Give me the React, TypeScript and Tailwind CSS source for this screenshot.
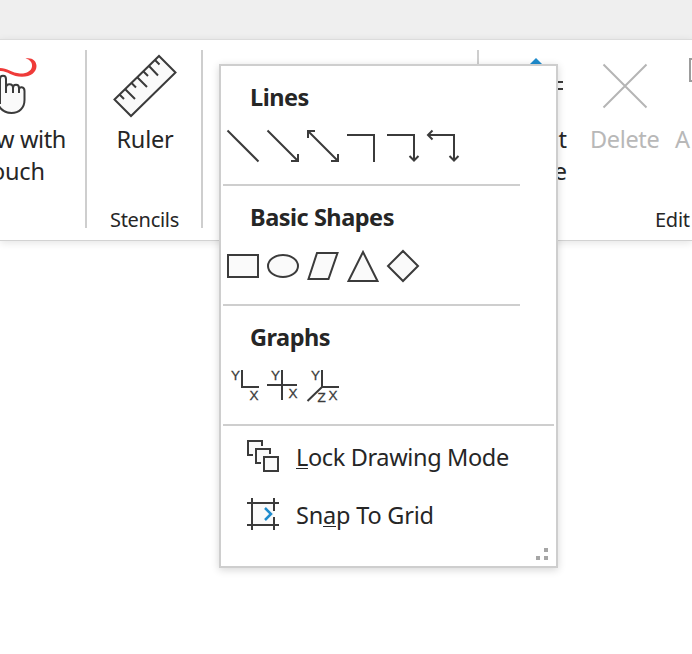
import type { ReactNode } from "react";

function Icon({ children }: { children: ReactNode }) {
  return (
    <svg viewBox="0 0 32 32" className="block h-8 w-8 shrink-0 overflow-visible" fill="none" stroke="#3b3b3b" strokeWidth="2">
      {children}
    </svg>
  );
}

function Section({ title, children }: { title: string; children: ReactNode }) {
  return (
    <section className="flex h-[120px] flex-col">
      <h2 className="h-16 pt-[15px] pl-[29px] text-[23.5px] leading-8 font-bold tracking-[-0.48px]">{title}</h2>
      <div className="flex gap-2 pl-1.5">{children}</div>
    </section>
  );
}

function Rule({ wide = false }: { wide?: boolean }) {
  return <div className={wide ? "ml-0.5 -mt-0.5 h-0.5 w-[331px] bg-[#cecece]" : "ml-0.5 -mt-0.5 h-0.5 w-[297px] bg-[#cecece]"} />;
}

function Divider() {
  return <div className="mt-[10px] h-[178px] w-0.5 shrink-0 bg-[#cecece]" />;
}

function Ribbon() {
  return (
    <div className="flex h-[202px] overflow-hidden border-t border-b border-t-[#dcdcdc] border-b-[#d2d2d2] bg-white text-[23.5px] leading-8 shadow-[0_2px_8px_rgba(0,0,0,0.11)]">
      <div className="flex w-[85px] shrink-0 flex-col">
        <svg viewBox="0 40 85 83" className="block h-[83px] w-[85px] shrink-0" fill="none">
          <path d="M0 71C7 70.500 12 76.800 22 76.800C31 76.800 36.500 72 36.500 66C36.500 60.500 31.500 57 25.500 58.500C30 59.500 32.500 62.500 32 66.500C31.500 71 26.500 73.800 20 73.500C12 73 7 68 0 68Z" fill="#ef3b39" />
          <path d="M0 104V79C0 74.500 6 74.500 6 79V93V88C6 83 13 83 13 88V93V88C13 83.500 19 83.500 19 88V93V90C19 86 24.500 86.500 24.500 91V100C24.500 108 19 113 11.500 113C4 113 0 109-2 104" fill="#fafafa" stroke="#3b3b3b" strokeWidth="2" />
        </svg>
        <div className="flex w-[85px] flex-col">
          <span className="-ml-1 whitespace-nowrap tracking-[-0.35px]">w with</span>
          <span className="-ml-[9px] whitespace-nowrap tracking-[-0.2px]">ouch</span>
        </div>
      </div>
      <Divider />
      <div className="flex w-[114px] shrink-0 flex-col items-center">
        <svg viewBox="87 40 114 83" className="block h-[83px] w-[114px] shrink-0" fill="#fafafa" stroke="#3b3b3b" strokeWidth="2">
          <path d="M114.500 99.500L159 56L175.500 72.500L131 116Z" />
          <path d="M119.500 94.500L124 99M125 89L135 99M131.500 83L136 87.500M137 77L147 87M143.500 71.500L148 76M149 66L158 75.500M155 60L159.500 64.500" />
        </svg>
        <span className="pl-0.5 tracking-[-0.2px]">Ruler</span>
        <span className="mt-[49px] pl-px text-[20px] tracking-[-0.3px]">Stencils</span>
      </div>
      <Divider />
      <div className="w-[274px] shrink-0" />
      <Divider />
      <div className="flex w-[103px] shrink-0 flex-col">
        <svg viewBox="479 40 103 83" className="block h-[83px] w-[103px] shrink-0" fill="none">
          <path d="M529 65L536 58L543 65Z" fill="#1e8bcd" />
          <path d="M550 82H563M550 89H563" stroke="#3b3b3b" strokeWidth="2" />
        </svg>
        <div className="flex w-[88px] flex-col items-end">
          <span>t</span>
          <span>e</span>
        </div>
      </div>
      <div className="flex w-[140px] shrink-0 flex-col text-[#b8b8b8]">
        <svg viewBox="582 40 140 83" className="block h-[83px] w-[140px] shrink-0" fill="none" stroke="#b5b5b5" strokeWidth="2">
          <path d="M603.500 64.500L646.500 107.500M646.500 64.500L603.500 107.500" />
          <path d="M720 59H690V81H720" stroke="#9c9c9c" />
        </svg>
        <div className="flex gap-[15px] pl-2">
          <span className="w-[70px] tracking-[-0.35px] whitespace-nowrap">Delete</span>
          <span>A</span>
        </div>
        <span className="mt-[81px] -translate-y-8 pl-[73px] text-[20px] tracking-[-0.25px] text-[#262626]">Edit</span>
      </div>
    </div>
  );
}

function GraphLabel({ x, y, children }: { x: number; y: number; children: string }) {
  return (
    <text x={x} y={y} className="font-['Liberation_Sans',sans-serif]" fontSize="13.500" fill="#3b3b3b" stroke="#3b3b3b" strokeWidth="0.3">
      {children}
    </text>
  );
}

function ShapesMenu() {
  return (
    <div className="absolute top-16 left-[219px] h-[504px] w-[339px] border-2 border-[#cecece] bg-white shadow-[0_2px_8px_rgba(0,0,0,0.16)]">
      <Section title="Lines">
        <Icon><path d="M.5 .5L31.500 31.500" /></Icon>
        <Icon><path d="M.5 .5L31 31M24 31H31V24" /></Icon>
        <Icon><path d="M1 1L31 31M24 31H31V24M8 1H1V8" /></Icon>
        <Icon><path d="M0 5H27V32" /></Icon>
        <Icon><path d="M0 5H27V31M22.500 26L27 30.500L31.500 26" /></Icon>
        <Icon><path d="M1 5H27V31M22.500 26L27 30.500L31.500 26M5.500 .5L1 5L5.500 9.500" /></Icon>
      </Section>
      <Rule />
      <Section title="Basic Shapes">
        <Icon><path d="M1 5H31V27H1Z" fill="#fafafa" /></Icon>
        <Icon><ellipse cx="16" cy="16" rx="15" ry="11" fill="#fafafa" /></Icon>
        <Icon><path d="M10 3H30.500L21.500 29H1.500Z" fill="#fafafa" /></Icon>
        <Icon><path d="M16 2L30.500 31H1.500Z" fill="#fafafa" /></Icon>
        <Icon><path d="M16 1L31 16L16 31L1 16Z" fill="#fafafa" /></Icon>
      </Section>
      <Rule />
      <Section title="Graphs">
        <Icon>
          <path d="M15 0V17H32" />
          <GraphLabel x={4} y={10}>Y</GraphLabel>
          <GraphLabel x={22.5} y={30}>X</GraphLabel>
        </Icon>
        <Icon>
          <path d="M15 0V30M0 15H30" />
          <GraphLabel x={4} y={10}>Y</GraphLabel>
          <GraphLabel x={21.5} y={28}>X</GraphLabel>
        </Icon>
        <Icon>
          <path d="M15 0V17H32M15 17L.5 31" />
          <GraphLabel x={4} y={10}>Y</GraphLabel>
          <GraphLabel x={10.5} y={32}>Z</GraphLabel>
          <GraphLabel x={21.5} y={30}>X</GraphLabel>
        </Icon>
      </Section>
      <Rule wide />
      <ul className="mt-px text-[23.5px] leading-8">
        <li className="flex h-[58px] items-center gap-[17px] pl-[26px]">
          <Icon>
            <g fill="#fafafa">
              <path d="M6 15H1V1H15V6" />
              <path d="M14 23H9V9H23V14" />
              <path d="M17 17H31V31H17Z" />
            </g>
          </Icon>
          <span className="pt-0.5 tracking-[-0.36px] whitespace-nowrap"><u className="decoration-1 underline-offset-2">L</u>ock Drawing Mode</span>
        </li>
        <li className="flex h-[58px] items-center gap-[17px] pl-[26px]">
          <Icon>
            <path d="M5 5H27V27H5Z" fill="#fafafa" stroke="none" />
            <path d="M0 5H32M0 27H32M5 0V32M27 0V13M27 19V32" />
            <path d="M18 10L24 16L18 22" stroke="#1e8bcd" strokeWidth="2.500" />
          </Icon>
          <span className="pt-0.5 tracking-[-0.2px] whitespace-nowrap">Sn<u className="decoration-1 underline-offset-2">a</u>p To Grid</span>
        </li>
      </ul>
      <div className="ml-[315px] mt-[5px] grid w-3 grid-cols-2 gap-1">
        <i className="h-1 w-1" />
        <i className="h-1 w-1 bg-[#a6a6a6]" />
        <i className="h-1 w-1 bg-[#a6a6a6]" />
        <i className="h-1 w-1 bg-[#a6a6a6]" />
      </div>
    </div>
  );
}

export default function App() {
  return (
    <main className="relative h-[654px] w-[692px] overflow-hidden bg-white font-['Noto_Sans',sans-serif] text-[#262626]">
      <div className="h-[39px] bg-[#efefef]" />
      <Ribbon />
      <ShapesMenu />
    </main>
  );
}
